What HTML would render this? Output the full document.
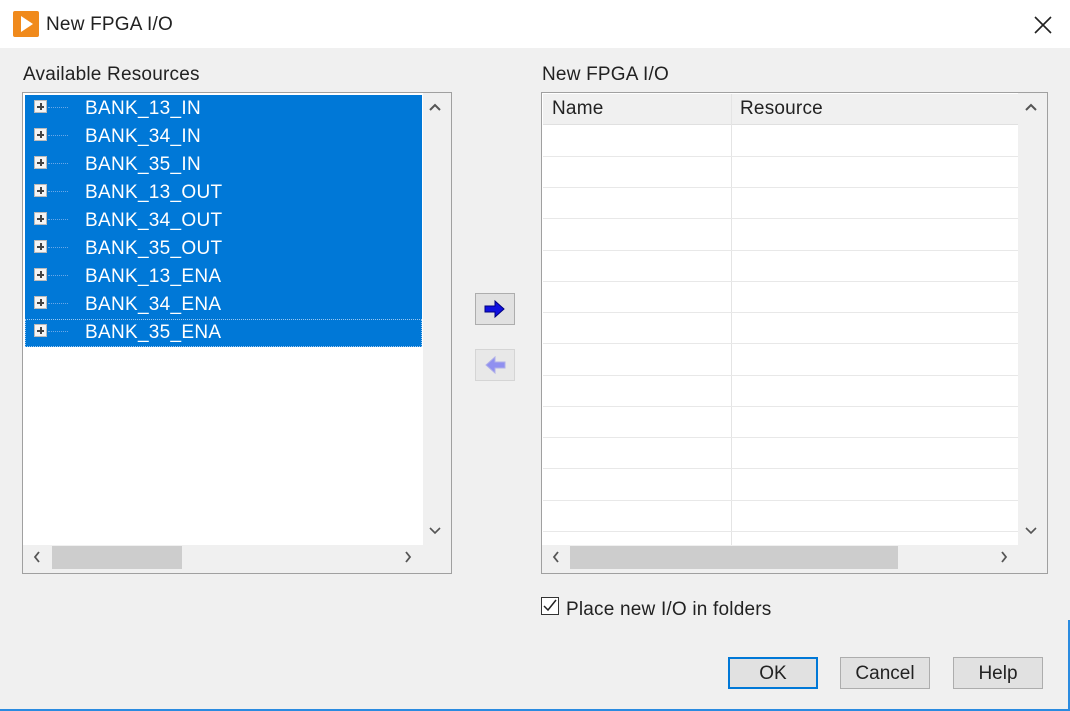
<!DOCTYPE html>
<html><head><style>
*{margin:0;padding:0;box-sizing:border-box}
body{width:1070px;height:711px;background:#f0f0f0;font-family:"Liberation Sans",sans-serif;position:relative;overflow:hidden;color:#222}
.a{position:absolute}
.t{font-size:19px;white-space:nowrap;letter-spacing:0.2px}
.row{position:absolute;left:85px;color:#fff;font-size:19px;letter-spacing:0.3px}
.pl{position:absolute;left:34px;width:13px;height:13px;border:1px solid #bbb;background:#f4f4f4}
.pl:before{content:"";position:absolute;left:2px;top:5px;width:7px;height:1.5px;background:#444}
.pl:after{content:"";position:absolute;left:5px;top:2px;width:1.5px;height:7px;background:#444}
.dl{position:absolute;left:48px;width:20px;height:1px;border-top:1px dotted #6aa8e8}
.hl{position:absolute;left:543px;width:475px;height:1px;background:#e8e8e8}
.btn{position:absolute;top:657px;width:90px;height:32px;background:#e1e1e1;border:1px solid #adadad;font-size:19px;text-align:center;line-height:32px}
</style></head><body>
<div class="a" style="left:0;top:0;width:1070px;height:48px;background:#fff"></div>
<div class="a" style="left:13px;top:11px;width:26px;height:26px;background:#f08a1c;border-radius:2px"></div>
<svg class="a" style="left:13px;top:11px" width="26" height="26"><path d="M8 5 L20 13 L8 21 Z" fill="#fff"/></svg>
<div class="a t" style="left:46px;top:14px">New FPGA I/O</div>
<svg class="a" style="left:1033px;top:15px" width="20" height="20"><path d="M2 2L18 18M18 2L2 18" stroke="#222" stroke-width="1.6"/></svg>
<div class="a" style="left:1068px;top:620px;width:2px;height:91px;background:#2a8be0"></div>
<div class="a" style="left:0;top:709px;width:1070px;height:2px;background:#2a8be0"></div>

<div class="a t" style="left:23px;top:64px">Available Resources</div>
<div class="a" style="left:22px;top:92px;width:430px;height:482px;border:1px solid #a0a0a0;background:#fff"></div>
<div class="a" style="left:25px;top:95px;width:397px;height:252px;background:#0078d7"></div>
<div class="a" style="left:25px;top:319px;width:397px;height:28px;border:1px dotted #9cc8f0"></div>
<div class="a" style="left:423px;top:93px;width:28px;height:480px;background:#f0f0f0"></div>
<div class="a" style="left:23px;top:545px;width:428px;height:28px;background:#f0f0f0"></div>
<div class="a" style="left:52px;top:546px;width:130px;height:23px;background:#cdcdcd"></div>
<svg class="a" style="left:428px;top:102px" width="14" height="10"><path d="M2 8L7 3L12 8" stroke="#555" stroke-width="2" fill="none"/></svg>
<svg class="a" style="left:428px;top:526px" width="14" height="10"><path d="M2 2L7 7L12 2" stroke="#555" stroke-width="1.6" fill="none"/></svg>
<svg class="a" style="left:32px;top:550px" width="10" height="14"><path d="M7 2L3 7L7 12" stroke="#555" stroke-width="1.8" fill="none"/></svg>
<svg class="a" style="left:403px;top:550px" width="10" height="14"><path d="M3 2L7 7L3 12" stroke="#555" stroke-width="1.8" fill="none"/></svg>

<div class="pl" style="top:100px"></div><div class="dl" style="top:107px"></div><div class="row" style="top:98px">BANK_13_IN</div>
<div class="pl" style="top:128px"></div><div class="dl" style="top:135px"></div><div class="row" style="top:126px">BANK_34_IN</div>
<div class="pl" style="top:156px"></div><div class="dl" style="top:163px"></div><div class="row" style="top:154px">BANK_35_IN</div>
<div class="pl" style="top:184px"></div><div class="dl" style="top:191px"></div><div class="row" style="top:182px">BANK_13_OUT</div>
<div class="pl" style="top:212px"></div><div class="dl" style="top:219px"></div><div class="row" style="top:210px">BANK_34_OUT</div>
<div class="pl" style="top:240px"></div><div class="dl" style="top:247px"></div><div class="row" style="top:238px">BANK_35_OUT</div>
<div class="pl" style="top:268px"></div><div class="dl" style="top:275px"></div><div class="row" style="top:266px">BANK_13_ENA</div>
<div class="pl" style="top:296px"></div><div class="dl" style="top:303px"></div><div class="row" style="top:294px">BANK_34_ENA</div>
<div class="pl" style="top:324px"></div><div class="dl" style="top:331px"></div><div class="row" style="top:322px">BANK_35_ENA</div>

<div class="a" style="left:475px;top:293px;width:40px;height:32px;border:1px solid #adadad;background:#e1e1e1"></div>
<svg class="a" style="left:483px;top:298px" width="24" height="22"><path d="M2 8H12V3L21 11L12 19V14H2Z" fill="#1010e0" stroke="#000080" stroke-width="1"/></svg>
<div class="a" style="left:475px;top:349px;width:40px;height:32px;border:1px solid #d5d5d5;background:#e8e8e8"></div>
<svg class="a" style="left:483px;top:354px" width="24" height="22"><path d="M22 8H12V3L3 11L12 19V14H22Z" fill="#9090f0" stroke="#b0b0e8" stroke-width="1"/></svg>

<div class="a t" style="left:542px;top:64px">New FPGA I/O</div>
<div class="a" style="left:541px;top:92px;width:507px;height:482px;border:1px solid #a0a0a0;background:#fff"></div>
<div class="a" style="left:543px;top:94px;width:475px;height:31px;background:#f0f0f0;border-bottom:1px solid #e0e0e0"></div>
<div class="a" style="left:731px;top:94px;width:1px;height:451px;background:#e4e4e4"></div>
<div class="a t" style="left:552px;top:98px">Name</div>
<div class="a t" style="left:740px;top:98px">Resource</div>
<div class="hl" style="top:156px"></div><div class="hl" style="top:187px"></div><div class="hl" style="top:218px"></div><div class="hl" style="top:250px"></div><div class="hl" style="top:281px"></div><div class="hl" style="top:312px"></div><div class="hl" style="top:343px"></div><div class="hl" style="top:375px"></div><div class="hl" style="top:406px"></div><div class="hl" style="top:437px"></div><div class="hl" style="top:468px"></div><div class="hl" style="top:500px"></div><div class="hl" style="top:531px"></div>
<div class="a" style="left:1018px;top:93px;width:29px;height:480px;background:#f0f0f0"></div>
<div class="a" style="left:542px;top:545px;width:505px;height:28px;background:#f0f0f0"></div>
<div class="a" style="left:570px;top:546px;width:328px;height:23px;background:#cdcdcd"></div>
<svg class="a" style="left:1024px;top:102px" width="14" height="10"><path d="M2 8L7 3L12 8" stroke="#555" stroke-width="2" fill="none"/></svg>
<svg class="a" style="left:1024px;top:526px" width="14" height="10"><path d="M2 2L7 7L12 2" stroke="#555" stroke-width="1.6" fill="none"/></svg>
<svg class="a" style="left:551px;top:550px" width="10" height="14"><path d="M7 2L3 7L7 12" stroke="#555" stroke-width="1.8" fill="none"/></svg>
<svg class="a" style="left:999px;top:550px" width="10" height="14"><path d="M3 2L7 7L3 12" stroke="#555" stroke-width="1.8" fill="none"/></svg>

<div class="a" style="left:541px;top:597px;width:18px;height:18px;border:1px solid #333;background:#fff"></div>
<svg class="a" style="left:541px;top:597px" width="18" height="18"><path d="M3 9L7 13L15 3" stroke="#222" stroke-width="1.5" fill="none"/></svg>
<div class="a t" style="left:566px;top:599px">Place new I/O in folders</div>

<div class="btn" style="left:728px;border:2px solid #0078d7;line-height:30px">OK</div>
<div class="btn" style="left:840px">Cancel</div>
<div class="btn" style="left:953px">Help</div>
</body></html>
